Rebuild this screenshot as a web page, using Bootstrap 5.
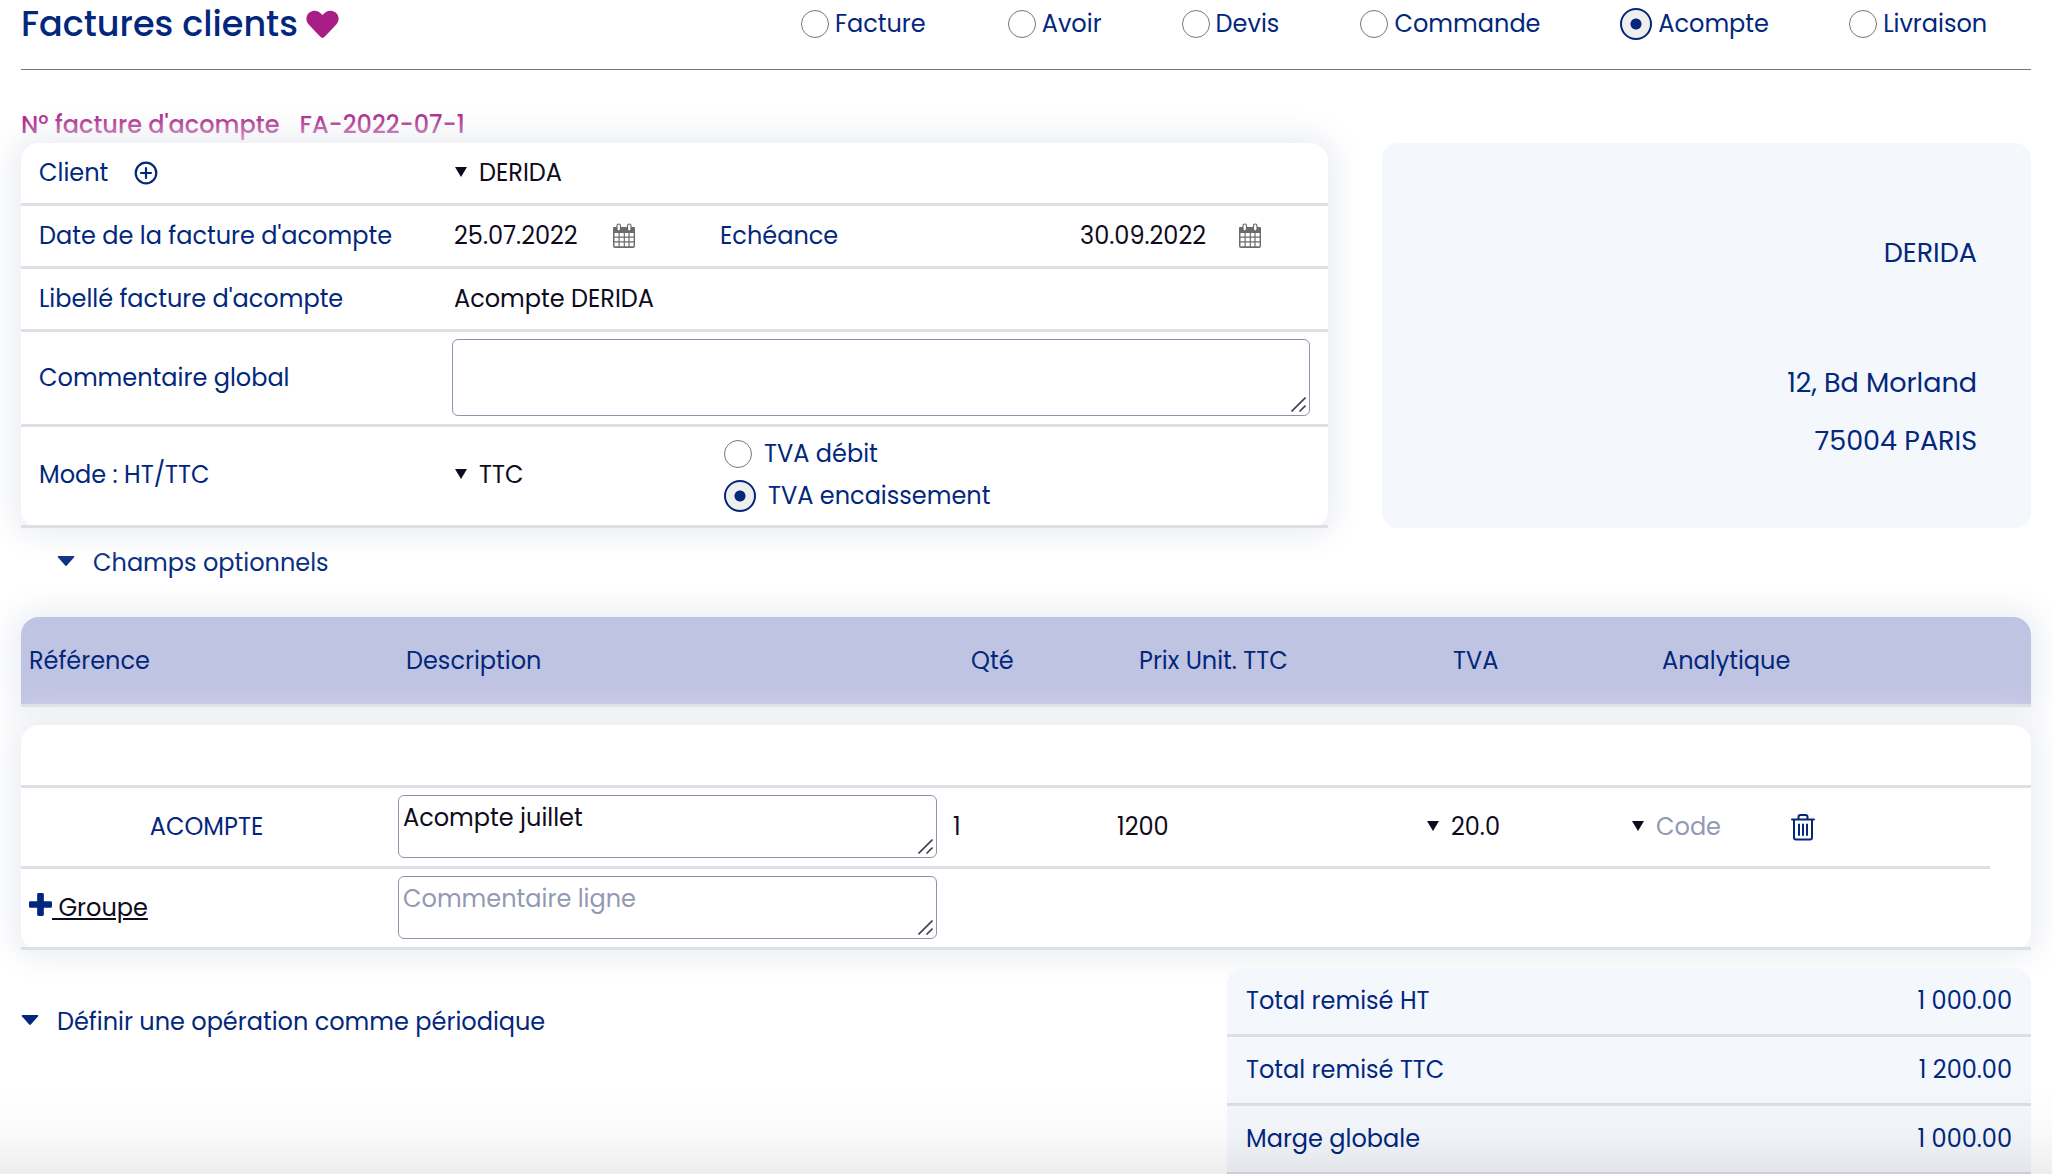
<!DOCTYPE html>
<html lang="fr">
<head>
<meta charset="utf-8">
<meta name="viewport" content="width=device-width, initial-scale=1">
<title>Factures clients</title>
<link href="https://cdn.jsdelivr.net/npm/bootstrap@5.3.0/dist/css/bootstrap.min.css" rel="stylesheet">
<style>
:root { --navy: #02277c; --ink: #0e0b1c; --rule: #dcdfe4; --panel: #f4f7fc; --muted-ink: #9299b3; --magenta: #a91e86; --halo: 0 0 32px 8px #ebedf2; }
body { font-family: Poppins, Inter, "Open Sans", sans-serif; font-size: 24px; line-height: 36px; color: var(--navy); background: #fff; }
.page { padding: 0 21px; }
.page-head { border-bottom: 1px solid #777; padding-bottom: 21px; }
.page-title { font-size: 35px; line-height: 48px; font-weight: 500; gap: 8px; }
.doc-types { width: 61.2%; display: grid; grid-template-columns: 207fr 174fr 179fr 260fr 229fr 182fr; }
.doc-types label { gap: 6px; }
.doc-types label, .vat-choice label { white-space: nowrap; }
.vat-choice { gap: 6px; }
.choice { appearance: none; flex: none; width: 28px; height: 28px; margin: 0; border: 1px solid #777; border-radius: 50%; background: #fff; }
.choice:checked { width: 32px; height: 32px; border: 2px solid var(--navy); background: radial-gradient(circle, var(--navy) 5px, #efefef 6px); }
.doc-number { color: var(--magenta); font-weight: 500; padding-top: 37px; gap: 20px; }
.sheet { background: #fff; border-radius: 18px; box-shadow: var(--halo); position: relative; }
.invoice-col { width: 65.03%; }
.address-col { width: 32.3%; background: var(--panel); border-radius: 16px; padding: 92px 54px 0; font-size: 27px; }
.addr-street { margin-top: 94px; }
.addr-city { margin-top: 22px; }
.form-line { display: grid; grid-template-columns: 413fr 268fr 358fr 232fr; padding: 12px 18px; border-bottom: 3px solid var(--rule); align-items: center; }
.form-line .wide { grid-column: 2 / -1; }
.form-line .plain-field { padding-left: 2px; }
.form-line .picker { padding-left: 3px; }
.form-line .picker .plain-field { padding-left: 0; }
.note-line { padding-top: 7px; padding-bottom: 8px; }
.mode-line { padding-top: 9px; padding-bottom: 11px; }
.note-field { height: 77px; }
.date-group { gap: 28px; }
.client-label { gap: 26px; }
.plain-field { border: 0; padding: 0; background: transparent; color: var(--ink); font: inherit; line-height: 36px; height: 36px; min-width: 0; outline-offset: 2px; }
.date-field { width: 132px; }
select.plain-field { appearance: none; width: 130px; }
select.is-empty { color: var(--muted-ink); }
.picker { display: flex; align-items: center; gap: 12px; }
.picker svg { margin-bottom: 2px; }
.text-zone { position: relative; }
.text-zone textarea { display: block; width: 100%; border: 1px solid #8d94ae; border-radius: 6px; padding: 4px; color: var(--ink); background: #fff; resize: none; }
.text-zone textarea::placeholder { color: var(--muted-ink); opacity: 1; }
.text-zone .grip { position: absolute; right: 4px; bottom: 4px; }
.line-comment { height: 63px; }
.icon-button { border: 0; background: none; padding: 0; color: inherit; display: inline-flex; align-items: center; }
.toggle-button { border: 0; background: none; padding: 0; color: inherit; display: inline-flex; align-items: center; gap: 18px; }
.toggle-button svg { margin-bottom: 5px; }
.optional-fields { padding: 17px 36px 36px; }
.lines-table { display: block; width: 100%; margin: 0; }
.lines-table thead, .lines-table tbody { display: block; }
.lines-table tr { display: grid; grid-template-columns: 371fr 549fr 168fr 314fr 209fr 158fr 200fr 41fr; }
.lines-table th, .lines-table td { display: flex; align-items: center; min-width: 0; white-space: nowrap; font-weight: 400; border-bottom: 3px solid var(--rule); padding: 0; }
.lines-table thead { background: #c0c4e3; border-radius: 18px 18px 0 0; box-shadow: var(--halo); }
.lines-table th { height: 90px; padding-left: 30px; }
.lines-table th:first-child { padding-left: 8px; }
.lines-table th:nth-child(2) { padding-left: 14px; }
.lines-table tbody { margin-top: 18px; }
.lines-table .blank-row td { grid-column: 1 / -1; height: 63px; }
.lines-table .desc { padding: 7px 4px 8px 6px; }
.lines-table .item-row .edge { border: 0; }
.group-link { color: var(--ink); text-decoration: underline; }
.group-link svg { vertical-align: baseline; }
.periodic { margin-top: 54px; }
.totals { width: 40%; margin-top: 18px; background: var(--panel); border-radius: 16px 16px 0 0; position: relative; }
.totals dl > div { padding: 15px 19px; border-bottom: 3px solid var(--rule); display: flex; justify-content: space-between; }
.totals dt { font-weight: 400; }
.bottom-fade { height: 90px; pointer-events: none; background: linear-gradient(to bottom, rgba(0,0,0,0), rgba(0,0,0,.02) 55%, rgba(0,0,0,.07)); }
</style>
</head>
<body>
<svg class="d-none" aria-hidden="true">
  <symbol id="calendar" viewBox="0 0 24 26">
    <path fill="#6b6b6b" d="M2 4h20a1 1 0 0 1 1 1v18a2 2 0 0 1-2 2H3a2 2 0 0 1-2-2V5a1 1 0 0 1 1-1z"/>
    <path fill="#fff" d="M2.500 10h4v3.500h-4zM7.700 10h4v3.500h-4zM12.900 10h3.500v3.500h-3.500zM17.600 10h4v3.500h-4zM2.500 14.700h4v3.500h-4zM7.700 14.700h4v3.500h-4zM12.900 14.700h3.500v3.500h-3.500zM17.600 14.700h4v3.500h-4zM2.500 19.400h4v3.800h-4zM7.700 19.400h4v3.800h-4zM12.900 19.400h3.500v3.800h-3.500zM17.600 19.400h4v3.800h-4z"/>
    <rect x="5" y="1" width="3.500" height="7" rx="1.700" fill="#fff" stroke="#6b6b6b" stroke-width="1.200"/>
    <rect x="15.500" y="1" width="3.500" height="7" rx="1.700" fill="#fff" stroke="#6b6b6b" stroke-width="1.200"/>
  </symbol>
  <symbol id="arrow" viewBox="0 0 12 10"><path fill="#0e0b1c" d="M0 0h12L6 10z"/></symbol>
  <symbol id="caret" viewBox="0 0 18 10"><path fill="#02277c" d="M1.500 0h15q1.500 0 .6 1.200L9.800 9.500q-.8.800-1.600 0L.9 1.200Q0 0 1.500 0z"/></symbol>
  <symbol id="grip" viewBox="0 0 15 15"><path fill="none" stroke="#444" stroke-width="1.600" d="M.5 14.500l14-14M8.500 14.500l6-6"/></symbol>
</svg>

<main class="page">
  <header class="page-head d-flex justify-content-between">
    <h1 class="page-title d-flex align-items-center m-0">Factures clients
      <svg width="33" height="29" viewBox="0 0 34 29" aria-hidden="true"><path fill="#a91e86" d="M17 28.500Q16 28.500 14 26.300L3 14.800C-1 10.500 0 4.600 3.800 2 7.800-.8 13-.2 17 4.800 21-.2 26.200-.8 30.200 2c3.800 2.600 4.800 8.500.8 12.800L20 26.300q-2 2.200-3 2.200z"/></svg>
    </h1>
    <div class="doc-types" role="radiogroup" aria-label="Type de document">
      <label class="d-flex align-items-center"><input class="choice" type="radio" name="kind">Facture</label>
      <label class="d-flex align-items-center"><input class="choice" type="radio" name="kind">Avoir</label>
      <label class="d-flex align-items-center"><input class="choice" type="radio" name="kind">Devis</label>
      <label class="d-flex align-items-center"><input class="choice" type="radio" name="kind">Commande</label>
      <label class="d-flex align-items-center"><input class="choice" type="radio" name="kind" checked>Acompte</label>
      <label class="d-flex align-items-center"><input class="choice" type="radio" name="kind">Livraison</label>
    </div>
  </header>

  <div class="doc-number d-flex"><span>N° facture d'acompte</span><span>FA-2022-07-1</span></div>

  <div class="d-flex justify-content-between">
    <form class="sheet invoice-col">
      <div class="form-line">
        <div class="client-label d-flex align-items-center">
          <label for="client">Client</label>
          <button class="icon-button" type="button" aria-label="Ajouter un client">
            <svg width="24" height="24" viewBox="0 0 24 24" fill="none" stroke="currentColor" stroke-width="2.200" stroke-linecap="round"><circle cx="12" cy="12" r="10.300"/><path d="M12 7v10M7 12h10"/></svg>
          </button>
        </div>
        <div class="picker"><svg width="12" height="10" aria-hidden="true"><use href="#arrow"/></svg><select id="client" class="plain-field"><option>DERIDA</option></select></div>
      </div>
      <div class="form-line">
        <label for="date">Date de la facture d'acompte</label>
        <div class="date-group d-flex align-items-center"><input id="date" class="plain-field date-field" value="25.07.2022"><button class="icon-button" type="button" aria-label="Choisir la date"><svg width="24" height="26"><use href="#calendar"/></svg></button></div>
        <label for="due">Echéance</label>
        <div class="date-group d-flex align-items-center"><input id="due" class="plain-field date-field" value="30.09.2022"><button class="icon-button" type="button" aria-label="Choisir l'échéance"><svg width="24" height="26"><use href="#calendar"/></svg></button></div>
      </div>
      <div class="form-line">
        <label for="title">Libellé facture d'acompte</label>
        <input id="title" class="plain-field wide" value="Acompte DERIDA">
      </div>
      <div class="form-line note-line">
        <label for="note">Commentaire global</label>
        <div class="text-zone wide"><textarea id="note" class="note-field"></textarea><svg class="grip" width="15" height="15" aria-hidden="true"><use href="#grip"/></svg></div>
      </div>
      <div class="form-line mode-line">
        <label for="mode">Mode : HT/TTC</label>
        <div class="picker"><svg width="12" height="10" aria-hidden="true"><use href="#arrow"/></svg><select id="mode" class="plain-field"><option>TTC</option></select></div>
        <div class="vat-choice ps-1 d-flex flex-column">
          <label class="d-flex align-items-center gap-2"><input class="choice" type="radio" name="vat"><span class="ms-1">TVA débit</span></label>
          <label class="d-flex align-items-center gap-2"><input class="choice" type="radio" name="vat" checked><span class="ms-1">TVA encaissement</span></label>
        </div>
      </div>
    </form>
    <address class="address-col text-end m-0">
      <div>DERIDA</div>
      <div class="addr-street">12, Bd Morland</div>
      <div class="addr-city">75004 PARIS</div>
    </address>
  </div>

  <div class="optional-fields d-flex"><button class="toggle-button" type="button"><svg width="18" height="10" aria-hidden="true"><use href="#caret"/></svg>Champs optionnels</button></div>

  <table class="lines-table">
    <thead>
      <tr><th scope="col">Référence</th><th scope="col">Description</th><th scope="col">Qté</th><th scope="col">Prix Unit. TTC</th><th scope="col">TVA</th><th scope="col">Analytique</th><th></th><th></th></tr>
    </thead>
    <tbody class="sheet">
      <tr class="blank-row"><td colspan="8"></td></tr>
      <tr class="item-row">
        <td class="justify-content-center">ACOMPTE</td>
        <td class="desc"><div class="text-zone w-100"><textarea class="line-comment" aria-label="Description">Acompte juillet</textarea><svg class="grip" width="15" height="15" aria-hidden="true"><use href="#grip"/></svg></div></td>
        <td class="ps-2"><input class="plain-field w-75 ms-1" value="1" aria-label="Quantité"></td>
        <td class="ps-2"><input class="plain-field w-75" value="1200" aria-label="Prix unitaire TTC"></td>
        <td class="ps-1"><div class="picker"><svg width="12" height="10" aria-hidden="true"><use href="#arrow"/></svg><select class="plain-field" aria-label="TVA"><option>20.0</option></select></div></td>
        <td><div class="picker"><svg width="12" height="10" aria-hidden="true"><use href="#arrow"/></svg><select class="plain-field is-empty" aria-label="Code analytique"><option>Code</option></select></div></td>
        <td><button class="icon-button" type="button" aria-label="Supprimer la ligne"><svg width="26" height="28" viewBox="0 0 26 28" fill="none" stroke="currentColor" stroke-width="2" stroke-linecap="round" stroke-linejoin="round"><path d="M2 6.500h22M8.500 6V4q0-2 2-2h5q2 0 2 2v2M4 7v17.500Q4 26.500 6 26.500h14q2 0 2-2V7M9 11.500v10.500M13 11.500v10.500M17 11.500v10.500"/></svg></button></td>
        <td class="edge"></td>
      </tr>
      <tr>
        <td class="ps-2"><a class="group-link" href="#"><svg width="23" height="23" viewBox="0 0 24 24" aria-hidden="true"><path fill="#02277c" d="M10 0h4q1.500 0 1.500 1.500v7h7q1.500 0 1.500 1.500v4q0 1.500-1.500 1.500h-7v7Q15.500 24 14 24h-4q-1.500 0-1.500-1.500v-7h-7Q0 15.500 0 14v-4q0-1.500 1.500-1.500h7v-7Q8.500 0 10 0z"/></svg> Groupe</a></td>
        <td class="desc"><div class="text-zone w-100"><textarea class="line-comment" placeholder="Commentaire ligne" aria-label="Commentaire ligne"></textarea><svg class="grip" width="15" height="15" aria-hidden="true"><use href="#grip"/></svg></div></td>
        <td></td><td></td><td></td><td></td><td></td><td></td>
      </tr>
    </tbody>
  </table>

  <div class="d-flex justify-content-between align-items-start">
    <button class="toggle-button periodic" type="button"><svg width="18" height="10" aria-hidden="true"><use href="#caret"/></svg>Définir une opération comme périodique</button>
    <section class="totals">
      <dl class="m-0">
        <div><dt>Total remisé HT</dt><dd class="m-0">1 000.00</dd></div>
        <div><dt>Total remisé TTC</dt><dd class="m-0">1 200.00</dd></div>
        <div><dt>Marge globale</dt><dd class="m-0">1 000.00</dd></div>
      </dl>
    </section>
  </div>
</main>
<div class="bottom-fade fixed-bottom"></div>
<script src="https://cdn.jsdelivr.net/npm/bootstrap@5.3.0/dist/js/bootstrap.bundle.min.js"></script>
</body>
</html>
